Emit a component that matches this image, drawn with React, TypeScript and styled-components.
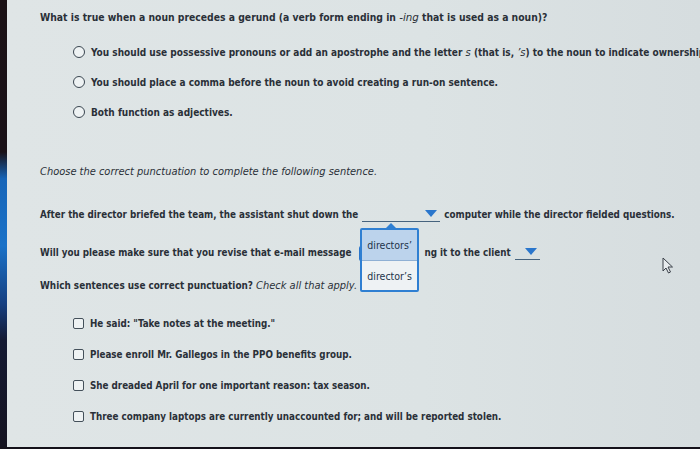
import styled, { createGlobalStyle } from "styled-components";

const GlobalStyle = createGlobalStyle`
    html, body {
        margin: 0;
        padding: 0;
        width: 700px;
        height: 449px;
        overflow: hidden;
        background: #14111a;
    }
    * {
        box-sizing: border-box;
    }
`

const Frame = styled.div`
    display: flex;
    width: 700px;
    height: 447px;
`

const Bezel = styled.div`
    width: 7px;
    flex-shrink: 0;
    background: linear-gradient(180deg, #1b1216 0%, #1a1218 34%, #1765b8 40%, #1a72c8 55%, #163f80 68%, #141a33 76%, #151320 100%);
`

const Screen = styled.div`
    position: relative;
    flex: 1;
    overflow: hidden;
    background: linear-gradient(90deg, #dfe5e6 0%, #dce3e4 60%, #d6dddf 100%);
    padding: 10px 0 0 33px;
    font-family: "DejaVu Sans Condensed", "DejaVu Sans", Tahoma, sans-serif;
    font-stretch: condensed;
    font-size: 9.75px;
    font-weight: bold;
    color: #2a3038;
    white-space: nowrap;
`

const Prompt = styled.div<{ $top?: number; $size?: number }>`
    margin-top: ${p => p.$top ?? 0}px;
    height: 14px;
    line-height: 14px;
    display: flex;
    align-items: center;
    font-size: ${p => p.$size ?? 9.75}px;
`

const Italic = styled.span`
    font-family: "DejaVu Sans", Verdana, sans-serif;
    font-stretch: normal;
    font-style: italic;
    font-weight: normal;
`

const Choices = styled.div<{ $gap: number; $top: number; $size?: number }>`
    display: flex;
    flex-direction: column;
    gap: ${p => p.$gap}px;
    margin-top: ${p => p.$top}px;
    padding-left: 33px;
    font-size: ${p => p.$size ?? 9.75}px;
`

const Choice = styled.label`
    display: flex;
    align-items: center;
    gap: 6px;
    height: 14px;
`

const Radio = styled.span`
    width: 12px;
    height: 12px;
    border-radius: 50%;
    border: 1.5px solid #3a4650;
    background: #eef2f3;
    flex-shrink: 0;
`

const Check = styled.span`
    width: 11px;
    height: 11px;
    border-radius: 2px;
    border: 1.5px solid #44505a;
    background: #eef2f3;
    flex-shrink: 0;
`

const Blank = styled.span<{ $width: number }>`
    position: relative;
    display: inline-flex;
    justify-content: flex-end;
    align-items: flex-start;
    flex-shrink: 0;
    width: ${p => p.$width}px;
    height: 14px;
    margin: 0 4px;
    border-bottom: 1.5px solid #46637e;
`

const Caret = styled.span`
    width: 0;
    height: 0;
    margin: 2px 3px 0 0;
    border-left: 6px solid transparent;
    border-right: 6px solid transparent;
    border-top: 7px solid #2a76cc;
`

const HiddenBox = styled.span`
    display: inline-block;
    flex-shrink: 0;
    width: 58px;
    height: 15px;
    margin: 0 7px 0 8px;
    border: 2px solid #2a76cc;
    border-radius: 2px;
`

const Listbox = styled.div`
    position: absolute;
    top: 20px;
    left: -2px;
    width: 59px;
    z-index: 2;
    border: 2px solid #2f7fd2;
    border-radius: 2px;
    background: #eef2f4;
    font-weight: normal;
    font-size: 10.5px;
    color: #23344a;

    &::before {
        content: "";
        position: absolute;
        top: -7px;
        left: 24px;
        border-left: 5px solid transparent;
        border-right: 5px solid transparent;
        border-bottom: 5px solid #2f7fd2;
    }
`

const Option = styled.div<{ $active?: boolean }>`
    height: ${p => (p.$active ? 31 : 29)}px;
    display: flex;
    align-items: center;
    padding-left: 5px;
    background: ${p => (p.$active ? "#bcd3ec" : "transparent")};
    border-bottom: ${p => (p.$active ? "1px solid #8fb0d4" : "none")};
`

const Cursor = styled.svg`
    position: absolute;
    left: 655px;
    top: 257px;
`

const App = (): JSX.Element => {
    return (
        <>
            <GlobalStyle />
            <Frame>
                <Bezel />
                <Screen>
                    <Prompt $size={10.3}>
                        What is true when a noun precedes a gerund (a verb form ending in&nbsp;<Italic>-ing</Italic>&nbsp;that is used as a noun)?
                    </Prompt>
                    <Choices $gap={16} $top={21} $size={10}>
                        <Choice><Radio /><span>You should use possessive pronouns or add an apostrophe and the letter <Italic>s</Italic> (that is, <Italic>’s</Italic>) to the noun to indicate ownership.</span></Choice>
                        <Choice><Radio />You should place a comma before the noun to avoid creating a run-on sentence.</Choice>
                        <Choice><Radio />Both function as adjectives.</Choice>
                    </Choices>
                    <Prompt $top={46} $size={9.9}>
                        <Italic>Choose the correct punctuation to complete the following sentence.</Italic>
                    </Prompt>
                    <Prompt $top={29}>
                        After the director briefed the team, the assistant shut down the
                        <Blank $width={78}>
                            <Caret />
                            <Listbox>
                                <Option $active>directors’</Option>
                                <Option>director’s</Option>
                            </Listbox>
                        </Blank>
                        computer while the director fielded questions.
                    </Prompt>
                    <Prompt $top={24}>
                        Will you please make sure that you revise that e-mail message
                        <HiddenBox />ng it to the client
                        <Blank $width={25}>
                            <Caret />
                        </Blank>
                    </Prompt>
                    <Prompt $top={19} $size={9.9}>
                        Which sentences use correct punctuation?&nbsp;<Italic>Check all that apply.</Italic>
                    </Prompt>
                    <Choices $gap={17} $top={23}>
                        <Choice><Check />He said: "Take notes at the meeting."</Choice>
                        <Choice><Check />Please enroll Mr. Gallegos in the PPO benefits group.</Choice>
                        <Choice><Check />She dreaded April for one important reason: tax season.</Choice>
                        <Choice><Check />Three company laptops are currently unaccounted for; and will be reported stolen.</Choice>
                    </Choices>
                    <Cursor width="12" height="17" viewBox="0 0 12 17">
                        <path d="M1 1 L1 14 L4 11 L6.5 16 L8.5 15 L6 10 L10.5 10 Z" fill="#e8ecee" stroke="#3a4048" strokeWidth="1" strokeLinejoin="round" />
                    </Cursor>
                </Screen>
            </Frame>
        </>
    );
}

export default App;
